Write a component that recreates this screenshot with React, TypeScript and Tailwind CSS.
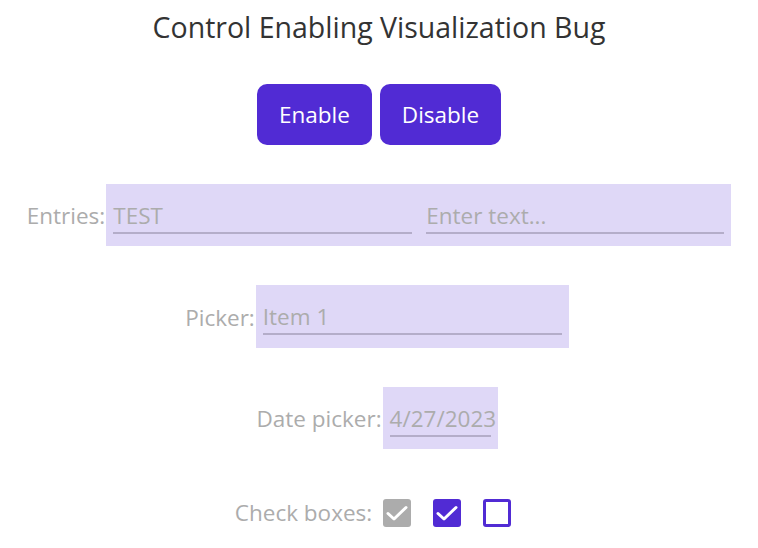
import React from 'react';

const FONT = { fontFamily: '"Open Sans", "Noto Sans", sans-serif' };

function Field({ value, placeholder, width }: { value?: string; placeholder?: string; width: string }) {
  return (
    <div className={`${width} h-full flex flex-col px-[7px]`}>
      <div className="h-[48px] flex items-center pt-[16px] text-[22.5px] text-[#acacac] leading-none whitespace-nowrap">
        {value ?? placeholder}
      </div>
      <div className="h-[2px] bg-[#b4adc9]" />
    </div>
  );
}

function Check({ kind }: { kind: 'gray' | 'purple' | 'empty' }) {
  if (kind === 'empty') {
    return <div className="w-[28px] h-[28px] rounded-[3px] border-[3px] border-[#512bd4] bg-white" />;
  }
  return (
    <div className={`w-[28px] h-[28px] rounded-[3px] ${kind === 'gray' ? 'bg-[#acacac]' : 'bg-[#512bd4]'}`}>
      <svg width="28" height="28" viewBox="0 0 28 28" fill="none">
        <path d="M5 14.5 L11 20 L23 8.5" stroke="white" strokeWidth="3" strokeLinecap="round" strokeLinejoin="round" />
      </svg>
    </div>
  );
}

export default function App() {
  return (
    <div className="w-[758px] h-[548px] bg-white flex flex-col items-center overflow-hidden" style={FONT}>
      <h1 className="mt-[8px] text-[28.5px] leading-[38px] text-[#333333]">Control Enabling Visualization Bug</h1>

      <div className="mt-[38px] flex gap-[8px]">
        <button className="h-[61px] w-[115px] rounded-[10px] bg-[#512bd4] text-white text-[22.5px]">Enable</button>
        <button className="h-[61px] w-[121px] rounded-[10px] bg-[#512bd4] text-white text-[22.5px]">Disable</button>
      </div>

      <div className="mt-[39px] h-[62px] flex items-stretch">
        <span className="self-center pt-[2px] text-[22.5px] text-[#acacac]">Entries:</span>
        <div className="ml-px flex bg-[#dfd8f7]">
          <Field value="TEST" width="w-[313px]" />
          <Field placeholder="Enter text..." width="w-[312px]" />
        </div>
      </div>

      <div className="mt-[39px] h-[63px] flex items-stretch pr-[4px]">
        <span className="self-center pt-[2px] text-[22.5px] text-[#acacac]">Picker:</span>
        <div className="ml-px flex bg-[#dfd8f7]">
          <Field value="Item 1" width="w-[313px]" />
        </div>
      </div>

      <div className="mt-[39px] h-[62px] flex items-stretch pr-[4px]">
        <span className="self-center pt-[2px] text-[22.5px] text-[#acacac]">Date picker:</span>
        <div className="ml-px flex bg-[#dfd8f7]">
          <Field value="4/27/2023" width="w-[115px]" />
        </div>
      </div>

      <div className="mt-[47px] flex items-center gap-[22px] pr-[12px]">
        <span className="mr-[-11px] text-[22.5px] text-[#acacac]">Check boxes:</span>
        <Check kind="gray" />
        <Check kind="purple" />
        <Check kind="empty" />
      </div>
    </div>
  );
}
